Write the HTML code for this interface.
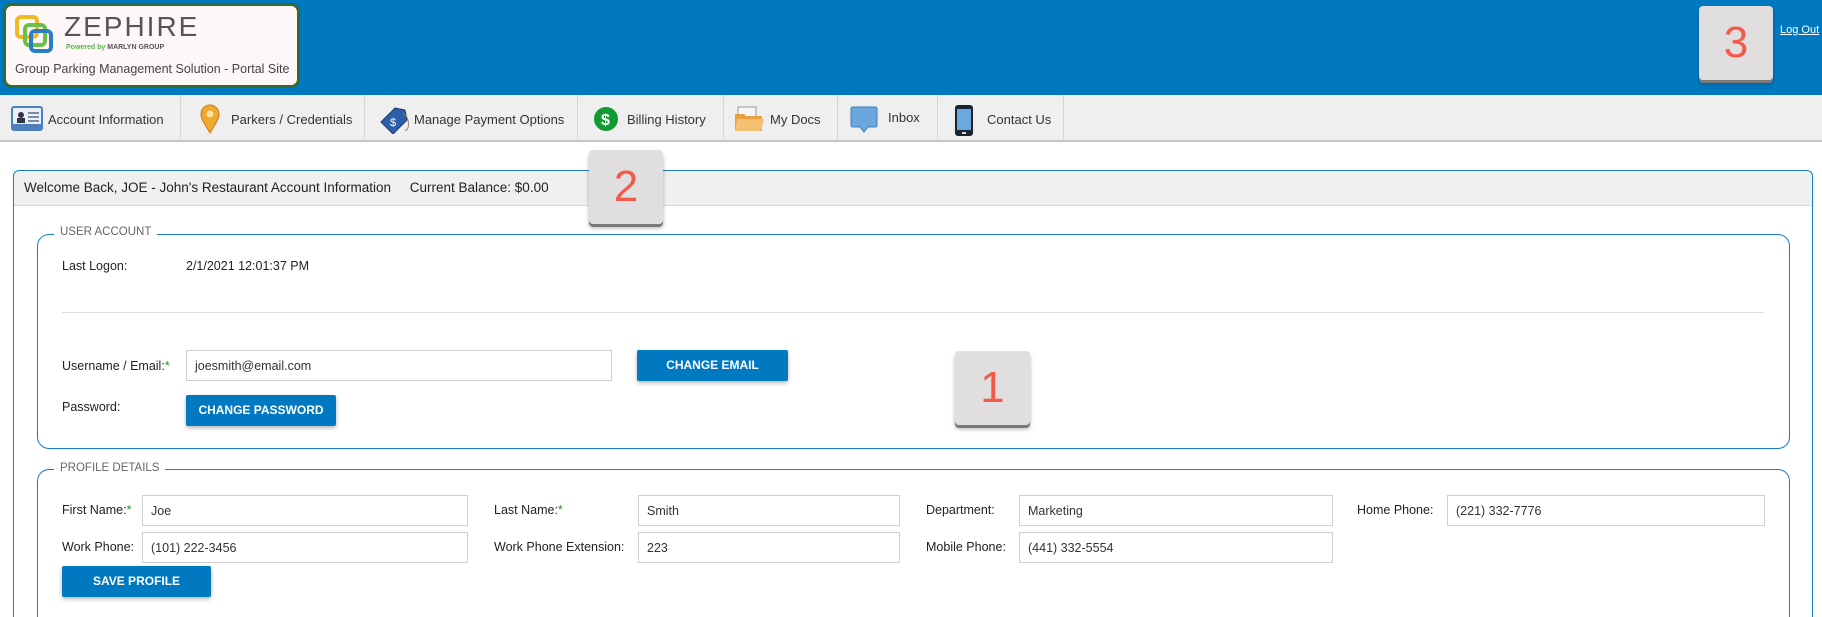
<!DOCTYPE html>
<html style="width:1822px;height:617px;overflow:hidden"><head><meta charset="utf-8"><style>
*{box-sizing:border-box;margin:0;padding:0}
html,body{width:1822px;height:617px;overflow:hidden}
body{background:#fff;font-family:"Liberation Sans",sans-serif;color:#222;position:relative}
.a{position:absolute}
.hdr{left:0;top:0;width:1822px;height:95px;background:#0079c1}
.logo{left:3px;top:3px;width:297px;height:85px;background:#fdf7f7;border:3px solid #3b6a2e;border-radius:9px}
.nav{left:0;top:95px;width:1822px;height:47px;background:#efefef;border-bottom:2px solid #c4c4c4}
.sep{top:95px;width:1px;height:46px;background:#d6d6d6}
.nt{font-size:13px;color:#333;top:112px}
.badge{background:#e0dede;border-radius:4px;box-shadow:0 3px 0 #7a7a7a,0 4px 4px rgba(0,0,0,.3);color:#f45a4a;font-size:44px;text-align:center;font-family:"Liberation Sans",sans-serif}
.fs{border:1.5px solid #1a7cc4;border-radius:12px}
.lg{font-size:11.5px;color:#666;background:#fff;padding:0 6px}
.lb{font-size:12.5px;color:#222}
.in{border:1px solid #d0d0d0;height:31px;font-size:12.5px;padding:8px 8px;color:#333}
.btn{background:#0079c1;color:#fff;font-size:12px;font-weight:bold;text-align:center;box-shadow:0 2px 4px rgba(0,0,0,.3);border-radius:2px}
.req{color:#2a8a2a}
</style></head><body>
<div class="a hdr"></div>
<div class="a logo">
 <svg class="a" style="left:8px;top:8px" width="42" height="42" viewBox="0 0 42 42">
  <rect x="3" y="3" width="20" height="20" rx="4" fill="none" stroke="#f2b824" stroke-width="4"/>
  <rect x="11" y="11" width="20" height="20" rx="4" fill="none" stroke="#6bbf4a" stroke-width="4"/>
  <rect x="17" y="17" width="20" height="20" rx="4" fill="none" stroke="#2a7fc4" stroke-width="4"/>
 </svg>
 <div class="a" style="left:58px;top:5px;font-size:28px;letter-spacing:2px;color:#555">ZEPHIRE</div>
 <div class="a" style="left:60px;top:38px;font-size:7px;font-weight:bold;color:#5ab54a">Powered by <span style="color:#555">MARLYN GROUP</span></div>
 <div class="a" style="left:9px;top:56px;font-size:12.5px;color:#444">Group Parking Management Solution - Portal Site</div>
</div>
<div class="a badge" style="left:1699px;top:6px;width:74px;height:74px;line-height:74px">3</div>
<div class="a" style="left:1780px;top:24px;font-size:11px;color:#fff;text-decoration:underline">Log Out</div>

<div class="a nav"></div>
<div class="a sep" style="left:180px"></div><div class="a sep" style="left:364px"></div><div class="a sep" style="left:577px"></div><div class="a sep" style="left:723px"></div><div class="a sep" style="left:837px"></div><div class="a sep" style="left:937px"></div><div class="a sep" style="left:1063px"></div>
<svg class="a" style="left:11px;top:106px" width="32" height="25"><rect x="1" y="1" width="30" height="23" rx="2" fill="#e9f0fa" stroke="#4d7fbf" stroke-width="2"/><rect x="1" y="18" width="30" height="6" fill="#4d7fbf"/><circle cx="10" cy="9" r="3" fill="#334"/><rect x="6" y="12" width="8" height="5" fill="#334"/><rect x="17" y="6" width="11" height="2" fill="#7a8aa8"/><rect x="17" y="10" width="11" height="2" fill="#7a8aa8"/><rect x="17" y="14" width="11" height="2" fill="#7a8aa8"/></svg>
<div class="a nt" style="left:48px">Account Information</div>
<svg class="a" style="left:199px;top:104px" width="22" height="30"><path d="M11 29 C5 19 2 15 2 10 A9 9 0 0 1 20 10 C20 15 17 19 11 29Z" fill="#f0a830" stroke="#c77c10"/><circle cx="11" cy="10" r="3.5" fill="#fde2a0"/></svg>
<div class="a nt" style="left:231px">Parkers / Credentials</div>
<svg class="a" style="left:379px;top:104px" width="32" height="30"><path d="M2 18 L16 4 L26 6 L28 16 L14 30Z" fill="#2c5fa8" stroke="#173a70"/><text x="11" y="22" font-size="11" fill="#fff" font-family="Liberation Sans">$</text><path d="M24 9 C32 14 30 28 26 26" fill="none" stroke="#a08060"/></svg>
<div class="a nt" style="left:414px">Manage Payment Options</div>
<svg class="a" style="left:593px;top:106px" width="26" height="26"><circle cx="13" cy="13" r="12" fill="#119a33"/><text x="8" y="19" font-size="16" font-weight="bold" fill="#fff" font-family="Liberation Sans">$</text></svg>
<div class="a nt" style="left:627px">Billing History</div>
<svg class="a" style="left:734px;top:106px" width="30" height="26"><rect x="4" y="1" width="18" height="20" fill="#f4f6fa" stroke="#999"/><path d="M1 8 L10 8 L12 10 L28 10 L28 25 L1 25Z" fill="#e9a040"/><path d="M3 13 L30 13 L27 25 L1 25Z" fill="#f5c070"/></svg>
<div class="a nt" style="left:770px">My Docs</div>
<svg class="a" style="left:849px;top:106px" width="30" height="28"><path d="M2 3 Q2 1 4 1 L26 1 Q28 1 28 3 L28 19 Q28 21 26 21 L19 21 L15 26 L11 21 L4 21 Q2 21 2 19Z" fill="#6ba6dc" stroke="#3d7fbf"/></svg>
<div class="a nt" style="left:888px;top:110px">Inbox</div>
<svg class="a" style="left:954px;top:104px" width="20" height="33"><rect x="1" y="1" width="18" height="31" rx="3" fill="#1b2230"/><rect x="3" y="5" width="14" height="21" fill="#6aa8e0"/><rect x="8" y="28" width="4" height="2" fill="#ddd"/></svg>
<div class="a nt" style="left:987px">Contact Us</div>

<div class="a" style="left:13px;top:170px;width:1800px;height:447px;border:1px solid #1a7cc4;border-bottom:none;border-radius:6px 6px 0 0"></div>
<div class="a" style="left:14px;top:171px;width:1798px;height:35px;background:#f0f0f0;border-bottom:1px solid #d6d6d6;border-radius:6px 6px 0 0"></div>
<div class="a" style="left:24px;top:180px;font-size:13.5px;color:#222">Welcome Back, JOE - John's Restaurant Account Information&nbsp;&nbsp;&nbsp;&nbsp;&nbsp;Current Balance: $0.00</div>
<div class="a badge" style="left:589px;top:150px;width:74px;height:74px;line-height:74px">2</div>

<div class="a fs" style="left:37px;top:234px;width:1753px;height:215px"></div>
<div class="a lg" style="left:54px;top:226px">USER ACCOUNT</div>
<div class="a lb" style="left:62px;top:259px">Last Logon:</div>
<div class="a lb" style="left:186px;top:259px">2/1/2021 12:01:37 PM</div>
<div class="a" style="left:62px;top:312px;width:1702px;height:1px;background:#ddd"></div>
<div class="a lb" style="left:62px;top:359px">Username / Email:<span class="req">*</span></div>
<div class="a in" style="left:186px;top:350px;width:426px">joesmith@email.com</div>
<div class="a btn" style="left:637px;top:350px;width:151px;height:31px;line-height:31px">CHANGE EMAIL</div>
<div class="a lb" style="left:62px;top:400px">Password:</div>
<div class="a btn" style="left:186px;top:395px;width:150px;height:31px;line-height:31px">CHANGE PASSWORD</div>
<div class="a badge" style="left:955px;top:351px;width:75px;height:74px;line-height:74px">1</div>

<div class="a fs" style="left:37px;top:469px;width:1753px;height:148px;border-bottom:none;border-radius:12px 12px 0 0"></div>
<div class="a lg" style="left:54px;top:462px">PROFILE DETAILS</div>
<div class="a lb" style="left:62px;top:503px">First Name:<span class="req">*</span></div>
<div class="a in" style="left:142px;top:495px;width:326px">Joe</div>
<div class="a lb" style="left:494px;top:503px">Last Name:<span class="req">*</span></div>
<div class="a in" style="left:638px;top:495px;width:262px">Smith</div>
<div class="a lb" style="left:926px;top:503px">Department:</div>
<div class="a in" style="left:1019px;top:495px;width:314px">Marketing</div>
<div class="a lb" style="left:1357px;top:503px">Home Phone:</div>
<div class="a in" style="left:1447px;top:495px;width:318px">(221) 332-7776</div>
<div class="a lb" style="left:62px;top:540px">Work Phone:</div>
<div class="a in" style="left:142px;top:532px;width:326px">(101) 222-3456</div>
<div class="a lb" style="left:494px;top:540px">Work Phone Extension:</div>
<div class="a in" style="left:638px;top:532px;width:262px">223</div>
<div class="a lb" style="left:926px;top:540px">Mobile Phone:</div>
<div class="a in" style="left:1019px;top:532px;width:314px">(441) 332-5554</div>
<div class="a btn" style="left:62px;top:566px;width:149px;height:31px;line-height:31px">SAVE PROFILE</div>
</body></html>
